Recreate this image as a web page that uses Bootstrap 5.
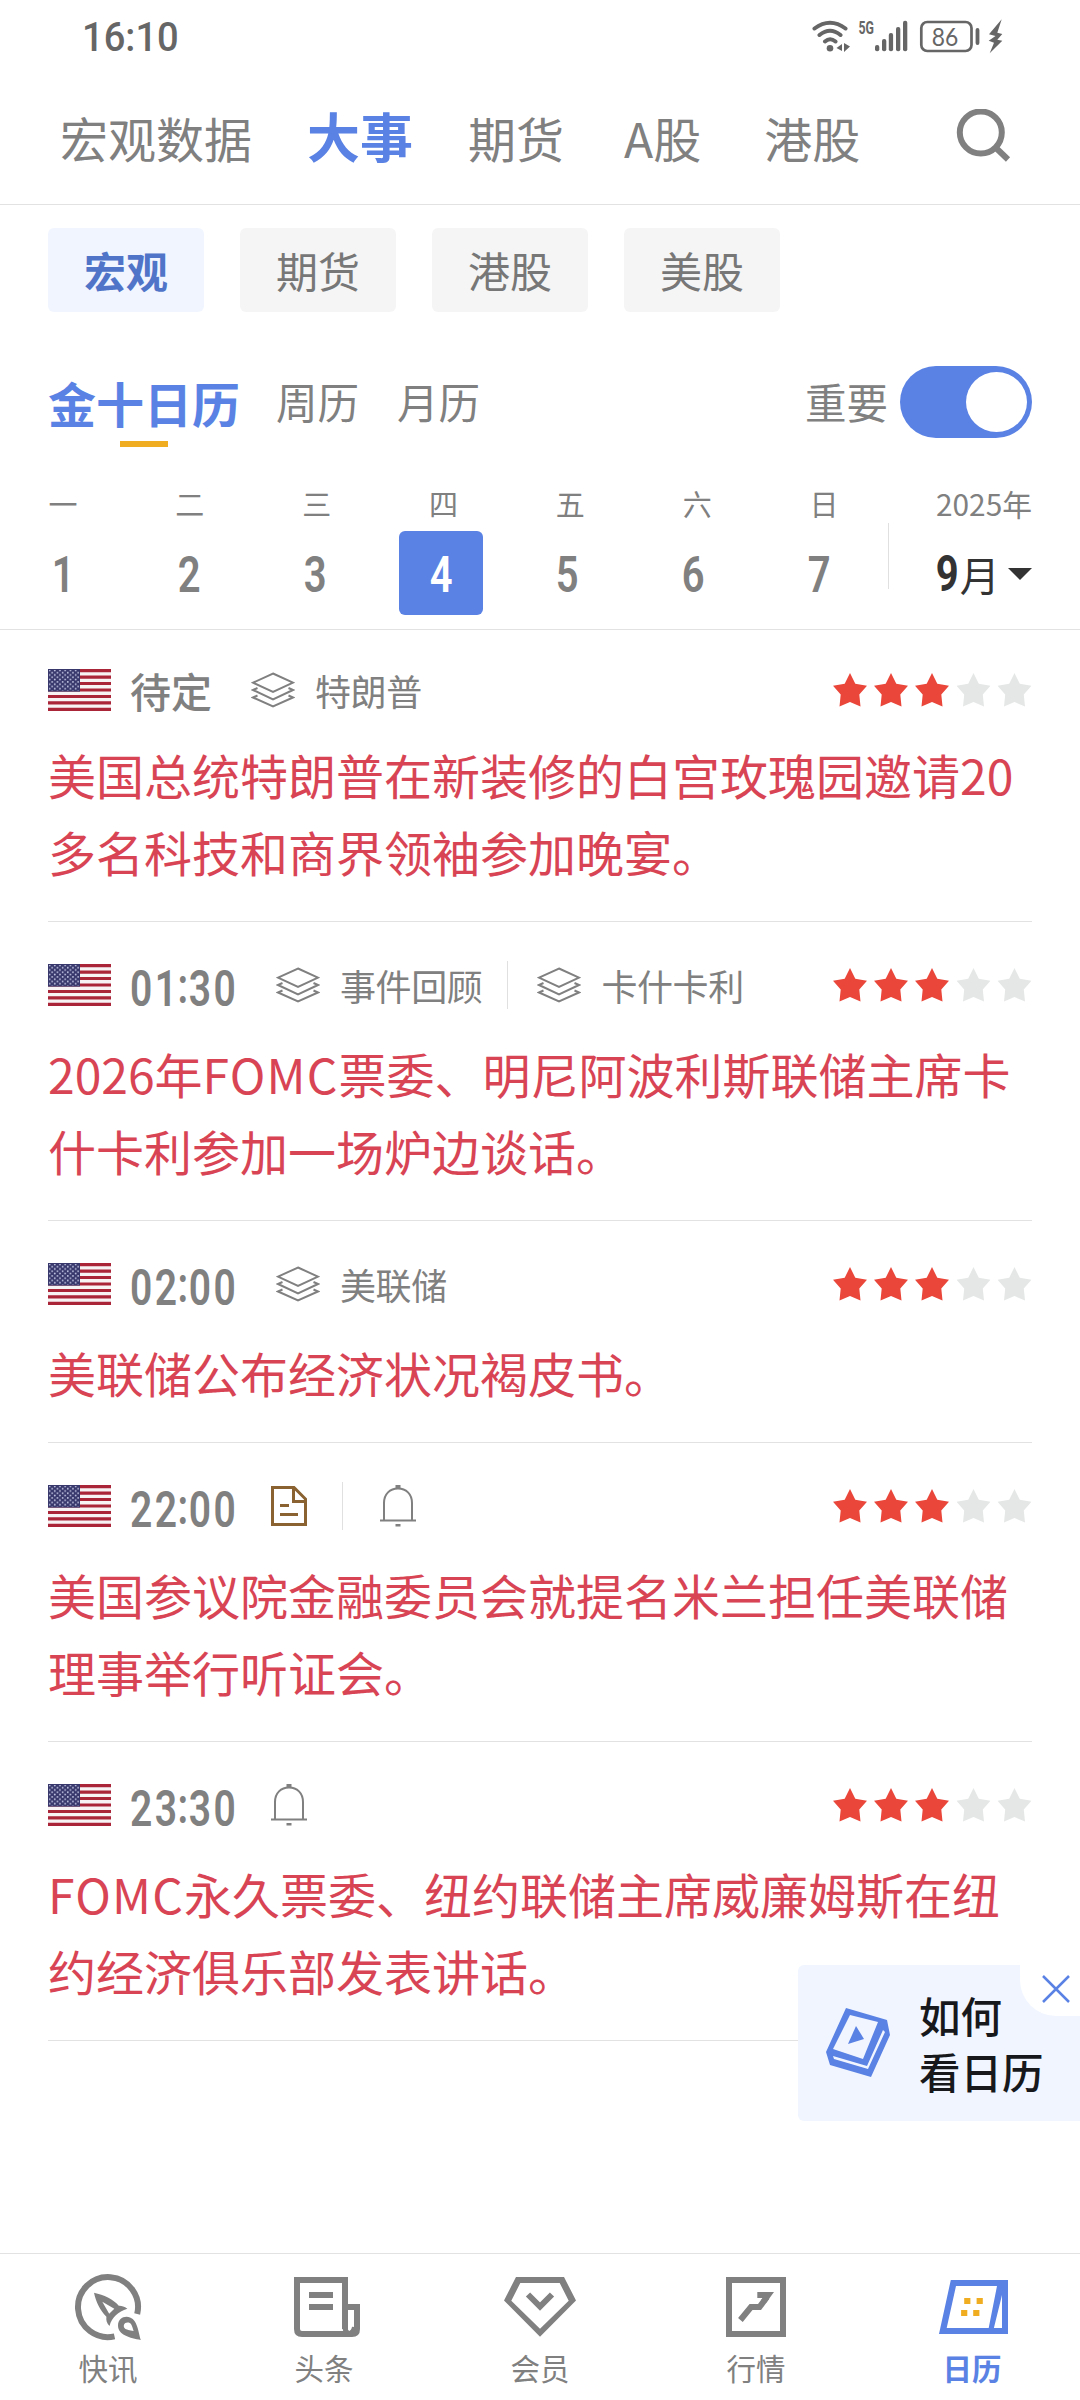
<!DOCTYPE html>
<html lang="zh-CN">
<head>
<meta charset="utf-8">
<meta name="viewport" content="width=device-width, initial-scale=1">
<title>金十日历</title>
<link href="https://cdn.jsdelivr.net/npm/bootstrap@5.3.0/dist/css/bootstrap.min.css" rel="stylesheet">
<style>
  body { width:1080px; height:2400px; overflow:hidden; background:#fff; color:#808080; font-family:"Noto Sans CJK SC",sans-serif; line-height:1; }
  svg { display:block; flex:none; }
  .blue { color:#5a82e4; }
  .din { font-family:Roboto,sans-serif; font-weight:600; display:inline-block; white-space:nowrap; transform-origin:0 50%; }
  .status { height:72px; padding:3px 76px 0 82px; }
  .status svg { margin-top:-3px; }
  .clock { font-size:41px; color:#666; font-weight:500; transform:scaleX(.93); }
  .topnav { height:133px; padding:0 68px 0 60px; border-bottom:1px solid #e2e2e2; font-size:48px; }
  .topnav span { margin-top:-2px; }
  .topnav .sel { font-size:53px; font-weight:700; margin:-5px 55px 0 55px; }
  .chips { gap:36px; padding:23px 48px 0; }
  .chip { width:156px; height:84px; border-radius:6px; background:#f5f5f5; font-size:42px; color:#777; }
  .chip.sel { background:#f0f5ff; color:#5074c8; font-weight:700; }
  .modes { height:72px; margin-top:54px; padding:0 48px; font-size:41.5px; }
  .modes .sel { font-size:48px; font-weight:700; position:relative; margin-top:-1px; }
  .modes .sel::after { content:""; position:absolute; left:72px; top:63px; width:48px; height:6px; background:#f0ad22; }
  .toggle { width:132px; height:72px; border-radius:36px; background:#5a82e4; padding:6px 5px; margin-left:12px; }
  .knob { width:61px; height:60px; border-radius:50%; background:#fff; }
  .week { height:192px; padding-left:21px; padding-right:48px; border-bottom:1px solid #e2e2e2; }
  .names { width:845px; padding-top:49px; font-size:29px; line-height:32px; }
  .names span { width:84px; text-align:center; }
  .nums { width:840px; margin-top:12px; }
  .dnum { width:84px; height:84px; border-radius:6px; font-size:50px; padding-top:3px; }
  .dnum .din, .month .din { transform-origin:50% 50%; transform:scaleX(.8); }
  .dnum.sel { background:#5a82e4; color:#fff; }
  .vline { width:1px; background:#e0e0e0; }
  .year { font-size:29.8px; height:32px; line-height:32px; margin-top:49px; }
  .month { height:84px; margin-top:13px; color:#333; font-size:40px; }
  .event { margin:0 48px; padding-top:39px; height:299px; border-bottom:1px solid #e2e2e2; }
  .event.one { height:222px; }
  .head { height:48px; }
  .event.first { height:292px; padding-top:36px; }
  .flag { margin-right:19px; }
  .time { width:105px; height:48px; line-height:48px; margin-right:41px; margin-top:-2px; font-size:50px; }
  .time .din { transform:scaleX(.78); letter-spacing:3.1px; }
  .colon { position:relative; top:-3px; margin:0 -2.4px; }
  .pend { font-size:41px; font-weight:500; margin-right:39px; }
  .tag { font-size:36px; gap:20px; letter-spacing:-.4px; }
  .event p { margin:26px -20px 0 0; font-size:48px; line-height:77px; color:#d94455; white-space:nowrap; }
  .event.first p { margin-top:22px; }
  .latin { letter-spacing:1.2px; }
  .help { position:absolute; left:798px; top:1965px; width:282px; height:156px; background:#f0f5ff; border-radius:6px 0 0 6px; color:#16181b; font-size:41.5px; font-weight:500; line-height:56px; padding-left:27px; }
  .close-corner { position:absolute; right:0; top:0; width:60px; height:51px; background:#fff; border-bottom-left-radius:36px; }
  .tabs { position:absolute; left:0; right:0; bottom:0; height:147px; border-top:1px solid #e2e2e2; background:#fff; font-size:29.5px; }
  .tabs .item { flex:1; padding-top:15px; }
  .tabs .item span { margin-top:4px; line-height:36px; }
</style>
</head>
<body class="position-relative">
<svg width="0" height="0" class="position-absolute">
  <defs>
    <pattern id="dots" width="5.2" height="4.6" patternUnits="userSpaceOnUse"><circle cx="1.6" cy="1.4" r=".9" fill="#c4c8e4"/><circle cx="4.2" cy="3.7" r=".9" fill="#c4c8e4"/></pattern>
    <symbol id="flag" viewBox="0 0 63 42">
      <rect width="63" height="42" rx="1" fill="#f7f3f5"/>
      <path stroke="#ab2538" stroke-width="3.23" d="M0 1.6h63M0 8.1h63M0 14.5h63M0 21h63M0 27.5h63M0 33.9h63M0 40.4h63"/>
      <rect width="32" height="22.6" fill="#38386c"/><rect x="1" y="1" width="30" height="20.5" fill="url(#dots)"/>
    </symbol>
    <symbol id="layers" viewBox="0 0 44 36"><g fill="none" stroke="#808080" stroke-width="2"><path d="M22 1.500L42 10.700L22 20L2 10.700Z"/><path d="M6.500 16L2 18L22 27.500L42 18L37.500 16"/><path d="M6.500 23.500L2 25.500L22 34.500L42 25.500L37.500 23.500"/></g></symbol>
    <symbol id="bell" viewBox="0 0 36 42"><path fill="none" stroke="#808080" stroke-width="2" d="M4 35V18C4 9 10 3.500 18 3.500S32 9 32 18V35M0 35.500H36"/><path fill="#808080" d="M15.500 0h5v4h-5zM15.500 39h5v2.500h-5z"/></symbol>
    <symbol id="doc" viewBox="0 0 36 40"><path fill="none" stroke="#8a6232" stroke-width="3" d="M1.500 1.500H23L34.500 13V38.500H1.500ZM22.500 1.500V15.500H34.500M9 19.500H18M9 28.500H27"/></symbol>
    <symbol id="star" viewBox="0 0 34 34"><path d="M17 0L22.300 10.800L34 12.800L26.300 21.500L27.500 33.500L17 29L6.500 33.500L7.700 21.500L0 12.800L11.700 10.800Z"/></symbol>
    <symbol id="rating" viewBox="0 0 199 34">
      <g fill="#ea4639"><use href="#star" width="34" height="34"/><use href="#star" x="41" width="34" height="34"/><use href="#star" x="82" width="34" height="34"/></g>
      <g fill="#e5e7e7"><use href="#star" x="123.500" width="34" height="34"/><use href="#star" x="164.500" width="34" height="34"/></g>
    </symbol>
  </defs>
</svg>

<div class="status d-flex align-items-center">
  <span class="din clock">16:10</span>
  <svg class="ms-auto" width="192" height="40" viewBox="0 0 192 40" fill="#666">
    <g fill="none" stroke="#666" stroke-width="4" stroke-linecap="round"><path d="M2.500 12.500Q18 1 33.500 12.500M7.500 19Q18 10.500 28.500 19M13 25.500Q18 21 23.500 25.500"/></g>
    <circle cx="18" cy="32.300" r="3.300"/><path d="M30 28V35L24.500 32ZM32 27L38 30.500L32 36Z"/>
    <text x="46.500" y="18.300" font-family="Roboto" font-weight="700" font-size="19" textLength="15.500" lengthAdjust="spacingAndGlyphs">5G</text>
    <rect x="63" y="29" width="4.300" height="6.300" rx="2"/><rect x="70" y="23" width="4.300" height="12.300" rx="2"/><rect x="76.800" y="17" width="4.300" height="18.300" rx="2"/><rect x="84" y="11" width="4.300" height="24.300" rx="2"/><rect x="91" y="4.700" width="4.300" height="30.600" rx="2"/>
    <rect x="109.300" y="6" width="50.200" height="29" rx="6" fill="none" stroke="#666" stroke-width="2.700"/><rect x="163.600" y="12" width="3.800" height="17" rx="1.900"/>
    <text x="119.700" y="29.800" font-family="Lato" font-size="24.500" textLength="26.500" lengthAdjust="spacingAndGlyphs">86</text>
    <path d="M189.700 3.300L177 18.300L183.500 20L176.700 24.700L182 26.700L177.700 37.300L190.300 24.700L185.300 23.700L190.300 18L185.300 16.700Z"/>
  </svg>
</div>

<nav class="topnav d-flex align-items-center">
  <span>宏观数据</span><span class="sel blue">大事</span><span>期货</span><span style="margin-left:60px">A股</span><span style="margin-left:63px">港股</span>
  <svg class="ms-auto" width="56" height="58" viewBox="0 0 56 58" fill="none" stroke="#808080" stroke-width="6"><circle cx="24.800" cy="23.500" r="21"/><path d="M39 38L52 50.500"/></svg>
</nav>

<div class="chips d-flex">
  <div class="chip sel d-flex align-items-center justify-content-center">宏观</div>
  <div class="chip d-flex align-items-center justify-content-center">期货</div>
  <div class="chip d-flex align-items-center justify-content-center">港股</div>
  <div class="chip d-flex align-items-center justify-content-center">美股</div>
</div>

<div class="modes d-flex align-items-center">
  <span class="sel blue">金十日历</span><span style="margin-left:36px">周历</span><span style="margin-left:38px">月历</span>
  <span class="ms-auto">重要</span><div class="toggle d-flex justify-content-end"><div class="knob"></div></div>
</div>

<div class="week d-flex">
  <div>
    <div class="names d-flex justify-content-between"><span>一</span><span>二</span><span>三</span><span>四</span><span>五</span><span>六</span><span>日</span></div>
    <div class="nums d-flex justify-content-between">
      <div class="dnum d-flex align-items-center justify-content-center"><span class="din">1</span></div>
      <div class="dnum d-flex align-items-center justify-content-center"><span class="din">2</span></div>
      <div class="dnum d-flex align-items-center justify-content-center"><span class="din">3</span></div>
      <div class="dnum sel d-flex align-items-center justify-content-center"><span class="din">4</span></div>
      <div class="dnum d-flex align-items-center justify-content-center"><span class="din">5</span></div>
      <div class="dnum d-flex align-items-center justify-content-center"><span class="din">6</span></div>
      <div class="dnum d-flex align-items-center justify-content-center"><span class="din">7</span></div>
    </div>
  </div>
  <div class="vline" style="height:66px;margin:85px 0 0 22px"></div>
  <div class="ms-auto">
    <div class="year">2025年</div>
    <div class="month d-flex align-items-center"><span class="din fw-bold" style="font-size:50px;margin-left:-3px">9</span><span style="margin-left:-2px">月</span><svg class="ms-auto" width="24" height="12" viewBox="0 0 24 12"><path fill="#333" d="M0 0H24L12 12Z"/></svg></div>
  </div>
</div>

<main>
  <section class="event first">
    <div class="head d-flex align-items-center"><svg class="flag" width="63" height="42"><use href="#flag"/></svg><span class="pend">待定</span>
      <span class="tag d-flex align-items-center"><svg width="44" height="36"><use href="#layers"/></svg>特朗普</span>
      <svg class="ms-auto" width="199" height="34"><use href="#rating"/></svg></div>
    <p>美国总统特朗普在新装修的白宫玫瑰园邀请20<br>多名科技和商界领袖参加晚宴。</p>
  </section>
  <section class="event">
    <div class="head d-flex align-items-center"><svg class="flag" width="63" height="42"><use href="#flag"/></svg><div class="time"><span class="din">01<span class="colon">:</span>30</span></div>
      <span class="tag d-flex align-items-center"><svg width="44" height="36"><use href="#layers"/></svg>事件回顾</span>
      <span class="vline align-self-stretch" style="margin:0 29px 0 25px"></span>
      <span class="tag d-flex align-items-center"><svg width="44" height="36"><use href="#layers"/></svg>卡什卡利</span>
      <svg class="ms-auto" width="199" height="34"><use href="#rating"/></svg></div>
    <p>2026年<span class="latin">FOMC</span>票委、明尼阿波利斯联储主席卡<br>什卡利参加一场炉边谈话。</p>
  </section>
  <section class="event one">
    <div class="head d-flex align-items-center"><svg class="flag" width="63" height="42"><use href="#flag"/></svg><div class="time"><span class="din">02<span class="colon">:</span>00</span></div>
      <span class="tag d-flex align-items-center"><svg width="44" height="36"><use href="#layers"/></svg>美联储</span>
      <svg class="ms-auto" width="199" height="34"><use href="#rating"/></svg></div>
    <p>美联储公布经济状况褐皮书。</p>
  </section>
  <section class="event">
    <div class="head d-flex align-items-center"><svg class="flag" width="63" height="42"><use href="#flag"/></svg><div class="time" style="margin-right:36px"><span class="din">22<span class="colon">:</span>00</span></div>
      <svg width="36" height="40"><use href="#doc"/></svg><span class="vline align-self-stretch" style="margin:0 37px 0 35px"></span><svg width="36" height="42"><use href="#bell"/></svg>
      <svg class="ms-auto" width="199" height="34"><use href="#rating"/></svg></div>
    <p>美国参议院金融委员会就提名米兰担任美联储<br>理事举行听证会。</p>
  </section>
  <section class="event">
    <div class="head d-flex align-items-center"><svg class="flag" width="63" height="42"><use href="#flag"/></svg><div class="time" style="margin-right:36px"><span class="din">23<span class="colon">:</span>30</span></div>
      <svg width="36" height="42"><use href="#bell"/></svg>
      <svg class="ms-auto" width="199" height="34"><use href="#rating"/></svg></div>
    <p><span class="latin">FOMC</span>永久票委、纽约联储主席威廉姆斯在纽<br>约经济俱乐部发表讲话。</p>
  </section>
</main>

<aside class="help d-flex align-items-center">
  <svg width="66" height="70" viewBox="0 0 66 70"><path fill="#5a82e4" fill-rule="evenodd" d="M21 0L62 12L65 27L46 69L5 57L1 44ZM25 7L8 41L38 51L53 14ZM58 22L42 58L8 48L9 51L43 61L60 24Z"/><path fill="#5a82e4" d="M31 18L39 31L23 36Z"/></svg>
  <div style="margin-left:28px;margin-top:-1px">如何<br>看日历</div>
  <div class="close-corner"><svg width="60" height="51" viewBox="0 0 60 51"><path stroke="#5a82e4" stroke-width="2.500" d="M23 11L49 37M49 11L23 37"/></svg></div>
</aside>

<footer class="tabs d-flex text-center">
  <div class="item d-flex flex-column align-items-center">
    <svg width="72" height="76" viewBox="0 0 72 76" fill="none" stroke="#808080" stroke-width="6"><path d="M65.200 45A30 30 0 1 0 42.500 67.400"/><path fill="#808080" stroke="none" fill-rule="evenodd" d="M22 23.700C32 26 41 30 46.800 36.700C49 36.500 52 37 55.400 39.700C46 43 40 48 37.500 57C34.500 54 34 51 34.400 47.700C28 41 24 33 22 23.700ZM30.300 32.700L37.200 44.700L42.300 39.700Z"/><path fill="#808080" stroke="none" fill-rule="evenodd" d="M68.800 71C58 69 46 66 46 56.500C46 51 50 47.700 54.500 47.700C65 48 66 61 68.800 71ZM61.600 62C60 56 59 53.500 55.500 53.500C52 53.500 51 57 52.500 59C54 61 58 61 61.600 62Z"/></svg>
    <span>快讯</span></div>
  <div class="item d-flex flex-column align-items-center">
    <svg width="72" height="76" viewBox="0 0 72 76" fill="none" stroke="#808080" stroke-width="6"><path d="M57 60V11H9V60Q9 65 14 65H64Q69 65 69 60V38H58"/><path d="M57 58Q57 63 61 65Q66 63 66.500 58" stroke-width="5"/><path d="M21 26H45M21 38H45"/></svg>
    <span>头条</span></div>
  <div class="item d-flex flex-column align-items-center">
    <svg width="72" height="76" viewBox="0 0 72 76"><path fill="#808080" fill-rule="evenodd" d="M12 8H60L72 31.500L36 67.700L0 31.500ZM16.300 14L7.300 31.700L36 59.700L64.700 31.700L55.700 14Z"/><path fill="none" stroke="#808080" stroke-width="6" d="M24 25.500L36 37.500L48 25.500"/></svg>
    <span>会员</span></div>
  <div class="item d-flex flex-column align-items-center">
    <svg width="72" height="76" viewBox="0 0 72 76" fill="none" stroke="#808080" stroke-width="6"><path d="M9 11H63V65H9Z"/><path d="M20.400 51L31 38H39.500L47 28"/><path fill="#808080" stroke="none" d="M37.300 23H54L46 34L41 31L43 29H37.300Z"/></svg>
    <span>行情</span></div>
  <div class="item d-flex flex-column align-items-center blue">
    <svg width="72" height="76" viewBox="0 0 72 76"><path fill="#5a82e4" fill-rule="evenodd" d="M14.800 11H72V65H3ZM20 17L10.700 59H52.700L61 17ZM66 26L57.900 59H66Z"/><path fill="#f0ad22" d="M28.200 29h6.200v6h-6.200zM40.600 29h6.200v6h-6.200zM25.100 41h6.200v6h-6.200zM37.200 41h6.200v6h-6.200z"/></svg>
    <span class="fw-bold">日历</span></div>
</footer>
<script src="https://cdn.jsdelivr.net/npm/bootstrap@5.3.0/dist/js/bootstrap.bundle.min.js"></script>
</body>
</html>
